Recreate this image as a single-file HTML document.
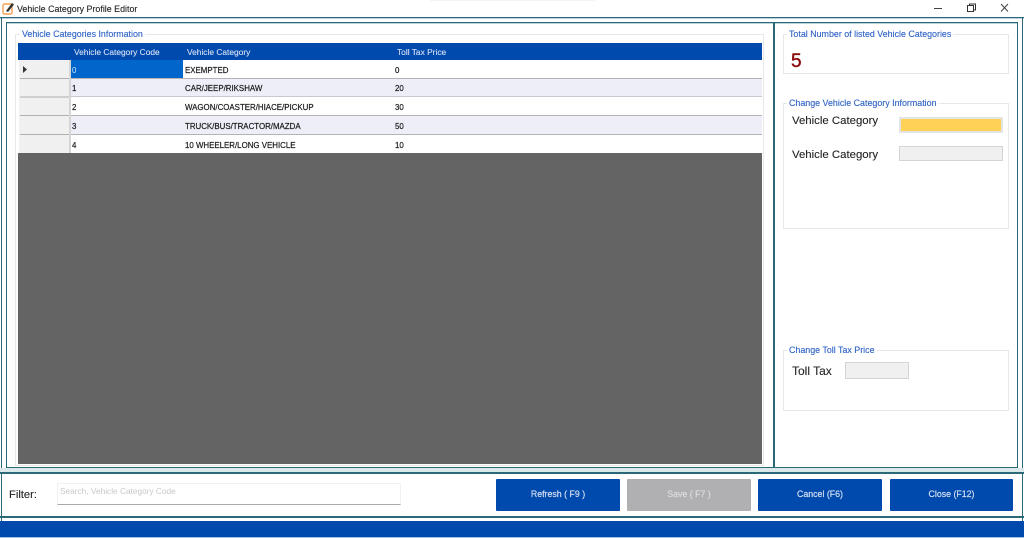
<!DOCTYPE html>
<html><head><meta charset="utf-8"><style>
html,body{margin:0;padding:0;background:#fff}
#p{position:relative;width:1024px;height:538px;overflow:hidden;background:#fff;font-family:"Liberation Sans",sans-serif;color:#222;filter:blur(.3px)}
#p div{position:absolute;box-sizing:border-box}
.t{white-space:nowrap;line-height:14px}
.l{background:#2b6878}
.lg{color:#2a5fc4;font-size:8.900px;background:#fff;padding:0 2px;white-space:nowrap;line-height:12px;-webkit-text-stroke:.1px #2a5fc4}
.gb{border:1px solid #e8e8e8}
.c{font-size:7.900px;color:#1a1a1a;white-space:nowrap;line-height:12px;-webkit-text-stroke:.2px #1a1a1a}
.h{font-size:8.400px;color:#d6e0f5;white-space:nowrap;line-height:12px;-webkit-text-stroke:.1px #d6e0f5}
.lab{font-size:11.400px;color:#222;white-space:nowrap;line-height:14px;-webkit-text-stroke:.1px #222}
.b{height:32px;top:479px;background:#004aad;color:#d5dff2;font-size:8.800px;text-align:center;line-height:31px;border-radius:1px;-webkit-text-stroke:.2px #d5dff2}
</style></head><body><div id="p">
<div style="left:430px;top:0;width:165px;height:1px;background:#f4f4f4"></div>
<svg style="position:absolute;left:2px;top:1px" width="13" height="14" viewBox="0 0 13 14"><rect x="1" y="3" width="9" height="10" rx="1.500" fill="#fff" stroke="#f0a050" stroke-width="1.400"/><path d="M4 10 L10 2 L12 3.500 L6 11 Z" fill="#333"/></svg>
<div class="t" style="left:17px;top:2px;font-size:8.900px;color:#222;-webkit-text-stroke:.1px #222">Vehicle Category Profile Editor</div>
<svg style="position:absolute;left:930px;top:2px" width="84" height="12" viewBox="0 0 84 12"><path d="M4 6.500H12" stroke="#444" stroke-width="1"/><path d="M37.500 3.500h6v6h-6z M39.500 3.500v-1.500h6v6h-2" fill="none" stroke="#333" stroke-width="1"/><path d="M71 2L78 9.500M78 2L71 9.500" stroke="#444" stroke-width="1"/></svg>

<div class="l" style="left:0;top:17px;width:1024px;height:1px"></div>
<div style="left:0;top:18px;width:1024px;height:1px;background:#b9d3d8"></div>
<div class="l" style="left:1px;top:17px;width:1px;height:504px"></div>
<div class="l" style="left:1022px;top:17px;width:1px;height:504px"></div>
<div class="l" style="left:6px;top:22px;width:1012px;height:1px"></div>
<div style="left:6px;top:23px;width:1012px;height:1px;background:#b9d3d8"></div>
<div class="l" style="left:6px;top:22px;width:1px;height:446px"></div>
<div class="l" style="left:1017px;top:22px;width:1px;height:446px"></div>
<div class="l" style="left:773px;top:22px;width:2px;height:446px"></div>
<div class="l" style="left:6px;top:467px;width:1012px;height:1px"></div>
<div style="left:0;top:468px;width:1024px;height:4px;background:#dbe8ea"></div>
<div class="l" style="left:0;top:472px;width:1024px;height:2px"></div>
<div class="l" style="left:0;top:516px;width:1024px;height:2px"></div>
<div style="left:0;top:521px;width:1024px;height:16px;background:#004aad"></div>
<div style="left:0;top:537px;width:1024px;height:1px;background:#a9bfe3"></div>

<div class="gb" style="left:15px;top:34px;width:749px;height:432px"></div>
<div class="lg" style="left:20px;top:28px">Vehicle Categories Information</div>
<div style="left:18px;top:43px;width:744px;height:17px;background:#004aad"></div>
<div class="h" style="left:74px;top:46px">Vehicle Category Code</div>
<div class="h" style="left:187px;top:46px">Vehicle Category</div>
<div class="h" style="left:397px;top:46px">Toll Tax Price</div>

<div style="left:71px;top:60px;width:691px;height:19px;background:#fff;border-bottom:1px solid #b4b4b4"></div>
<div style="left:71px;top:79px;width:691px;height:18px;background:#eeeef8;border-bottom:1px solid #c8c8d0"></div>
<div style="left:71px;top:97px;width:691px;height:19px;background:#fff;border-bottom:1px solid #b4b4b4"></div>
<div style="left:71px;top:116px;width:691px;height:19px;background:#eeeef8;border-bottom:1px solid #b4b4b4"></div>
<div style="left:71px;top:135px;width:691px;height:18px;background:#fff"></div>
<div style="left:19px;top:60px;width:50px;height:93px;background:#f0f0f0"></div>
<div style="left:20px;top:78px;width:49px;height:1px;background:#b0b0b0"></div>
<div style="left:20px;top:96px;width:49px;height:2px;background:#cfcfcf"></div>
<div style="left:20px;top:115px;width:49px;height:1px;background:#b0b0b0"></div>
<div style="left:20px;top:134px;width:49px;height:1px;background:#b0b0b0"></div>
<div style="left:69px;top:60px;width:2px;height:93px;background:#d6d6d6"></div>
<div style="left:71px;top:60px;width:112px;height:18px;background:#0066cc"></div>
<svg style="position:absolute;left:22px;top:65px" width="6" height="9"><path d="M1 1L5 4.500L1 8Z" fill="#333"/></svg>

<div class="c" style="left:72px;top:65px;color:#d5e3f7;-webkit-text-stroke:0">0</div>
<div class="c" style="left:185px;top:65px">EXEMPTED</div>
<div class="c" style="left:395px;top:65px">0</div>
<div class="c" style="left:72px;top:83px">1</div>
<div class="c" style="left:185px;top:83px">CAR/JEEP/RIKSHAW</div>
<div class="c" style="left:395px;top:83px">20</div>
<div class="c" style="left:72px;top:102px">2</div>
<div class="c" style="left:185px;top:102px">WAGON/COASTER/HIACE/PICKUP</div>
<div class="c" style="left:395px;top:102px">30</div>
<div class="c" style="left:72px;top:121px">3</div>
<div class="c" style="left:185px;top:121px">TRUCK/BUS/TRACTOR/MAZDA</div>
<div class="c" style="left:395px;top:121px">50</div>
<div class="c" style="left:72px;top:140px">4</div>
<div class="c" style="left:185px;top:140px">10 WHEELER/LONG VEHICLE</div>
<div class="c" style="left:395px;top:140px">10</div>
<div style="left:18px;top:153px;width:744px;height:311px;background:#646464"></div>

<div class="gb" style="left:783px;top:34px;width:226px;height:40px"></div>
<div class="lg" style="left:787px;top:28px">Total Number of listed Vehicle Categories</div>
<div class="t" style="left:791px;top:53px;font-size:19px;line-height:18px;color:#8b0a0a;-webkit-text-stroke:.4px #8b0a0a">5</div>

<div class="gb" style="left:783px;top:103px;width:226px;height:126px"></div>
<div class="lg" style="left:787px;top:97px">Change Vehicle Category Information</div>
<div class="lab" style="left:792px;top:114px">Vehicle Category</div>
<div style="left:899px;top:117px;width:104px;height:16px;background:#ffd257;border:2px solid #e4e4e4"></div>
<div class="lab" style="left:792px;top:148px">Vehicle Category</div>
<div style="left:899px;top:146px;width:104px;height:15px;background:#f0f0f0;border:1px solid #d4d4d4"></div>

<div class="gb" style="left:783px;top:350px;width:226px;height:61px"></div>
<div class="lg" style="left:787px;top:344px">Change Toll Tax Price</div>
<div class="lab" style="left:792px;top:364px;font-size:12px">Toll Tax</div>
<div style="left:845px;top:362px;width:64px;height:17px;background:#f0f0f0;border:1px solid #d4d4d4"></div>

<div class="lab" style="left:9px;top:488px;font-size:11.200px">Filter:</div>
<div style="left:57px;top:483px;width:344px;height:22px;border:1px solid #f0f0f0;border-bottom:1px solid #aaa"></div>
<div class="t" style="left:60px;top:484px;font-size:8.300px;color:#c8c8c8">Search, Vehicle Category Code</div>

<div class="b" style="left:496px;width:124px">Refresh ( F9 )</div>
<div class="b" style="left:627px;width:124px;background:#b0b0b3;color:#dcdcdc;-webkit-text-stroke:.2px #dcdcdc">Save ( F7 )</div>
<div class="b" style="left:758px;width:124px">Cancel (F6)</div>
<div class="b" style="left:890px;width:123px">Close (F12)</div>
</div></body></html>
